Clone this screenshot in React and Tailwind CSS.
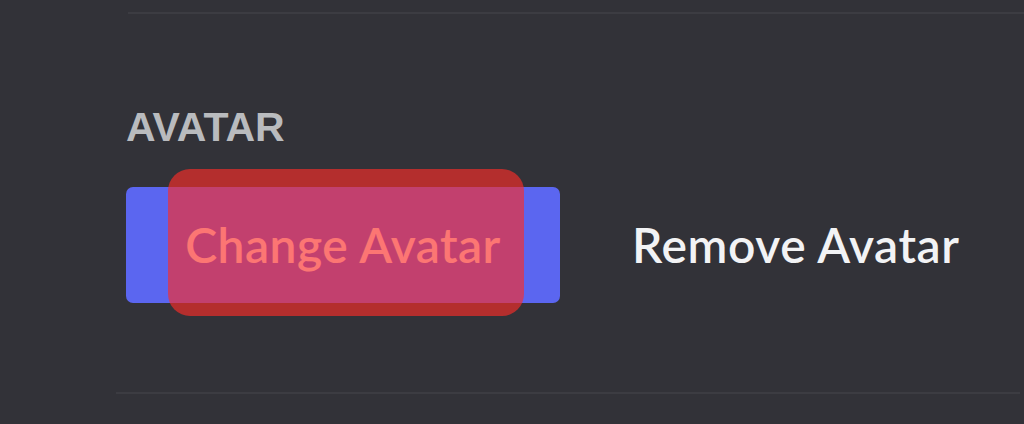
import React from "react";

const Divider = ({ className }) => (
    <div className={`h-[2px] bg-[#3c3c42] ${className}`} />
);

export default function App() {
    return (
        <div className="w-full h-[424px] bg-[#323238] overflow-hidden font-['Lato','Noto_Sans',sans-serif]">
            <Divider className="mt-[12px] ml-[128px]" />

            <section className="pl-[126px] pt-[93px]">
                <h2 className="font-['Liberation_Sans',Arial,sans-serif] font-bold text-[41px] leading-none uppercase text-[#b9bbbe]">
                    Avatar
                </h2>

                <div className="flex items-center mt-[39px]">
                    <div className="relative">
                        <button className="w-[434px] h-[116px] rounded-[7px] bg-[#5b66f0] text-white text-[48px] font-semibold tracking-[0.5px]">
                            Change Avatar
                        </button>
                        {/* highlight marker over the primary button */}
                        <div className="absolute left-[42px] top-[-18px] w-[356px] h-[147px] rounded-[22px] bg-[#fa2d28]/65 pointer-events-none" />
                    </div>
                    <button className="ml-[72px] text-[48px] font-semibold tracking-[0.6px] text-[#f2f3f5]">
                        Remove Avatar
                    </button>
                </div>
            </section>

            <Divider className="mt-[89px] ml-[116px] mr-[4px]" />
        </div>
    );
}
